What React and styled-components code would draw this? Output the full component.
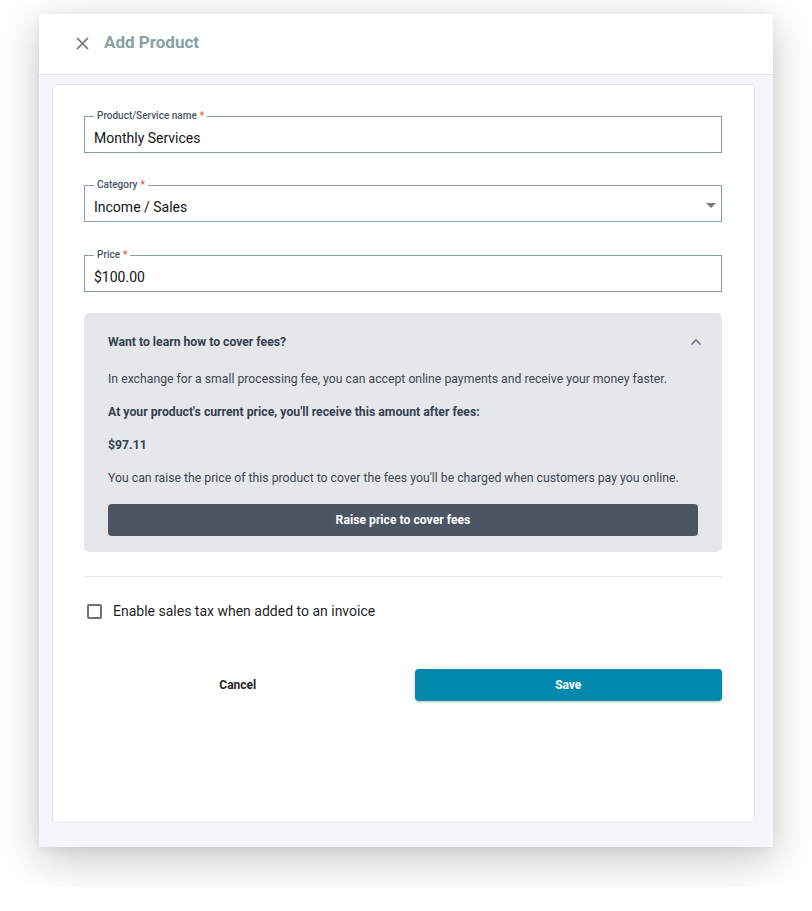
import styled, { createGlobalStyle } from "styled-components";

const GlobalStyle = createGlobalStyle`
  * { box-sizing: border-box; }
  body {
    margin: 0;
    background: #ffffff;
    font-family: Roboto, "Liberation Sans", Arial, sans-serif;
  }
`;

const Page = styled.div`
  padding: 14px 39px 40px 39px;
`;

const Modal = styled.div`
  width: 734px;
  height: 833px;
  display: flex;
  flex-direction: column;
  background: #f5f6fa;
  box-shadow: 0 12px 40px rgba(0, 0, 0, 0.22), 0 2px 10px rgba(0, 0, 0, 0.06);
`;

const Header = styled.div`
  height: 61px;
  flex-shrink: 0;
  display: flex;
  align-items: center;
  gap: 14px;
  padding: 0 0 4px 35px;
  background: #ffffff;
  border-bottom: 1px solid #e3e5ea;
`;

const CloseBtn = styled.button`
  all: unset;
  width: 16px;
  height: 16px;
  display: flex;
  align-items: center;
  justify-content: center;
  margin-top: 2px;
  cursor: pointer;
`;

const Title = styled.h1`
  margin: 0;
  font-size: 17px;
  font-weight: 700;
  color: #86a0a4;
`;

const Body = styled.div`
  flex: 1;
  padding: 9px 18px 24px 13px;
  display: flex;
`;

const Card = styled.div`
  flex: 1;
  background: #ffffff;
  border: 1px solid #e6e8ec;
  border-radius: 4px;
  padding: 31px 32px 0 31px;
  display: flex;
  flex-direction: column;
`;

const Field = styled.div`
  position: relative;
  height: 37px;
  border: 1px solid #83a0a4;
  display: flex;
  align-items: center;
  padding: 7px 9px 0 9px;
  margin-bottom: ${(p) => p.$mb || 32}px;
  font-size: 14px;
  color: #151515;
`;

const Label = styled.span`
  position: absolute;
  top: -7px;
  left: 9px;
  padding: 0 3px;
  background: #ffffff;
  font-size: 10px;
  line-height: 12px;
  font-weight: 500;
  color: #4b5563;
`;

const Req = styled.span`
  color: #e8592a;
  margin-left: 3px;
`;

const Caret = styled.span`
  position: absolute;
  right: 5px;
  top: 17px;
  border-left: 5px solid transparent;
  border-right: 5px solid transparent;
  border-top: 5px solid #757b83;
`;

const InfoBox = styled.div`
  background: #e5e7eb;
  border-radius: 5px;
  padding: 21px 24px 16px 24px;
  display: flex;
  flex-direction: column;
  gap: 17px;
`;

const InfoHead = styled.div`
  display: flex;
  align-items: center;
  justify-content: space-between;
  margin-bottom: 4px;
  svg {
    margin-right: -4px;
  }
`;

const InfoTitle = styled.div`
  font-size: 12.2px;
  line-height: 16px;
  font-weight: 700;
  color: #374151;
`;

const Text = styled.p`
  margin: 0;
  font-size: 12.25px;
  line-height: 16px;
  font-weight: ${(p) => (p.$bold ? 700 : 400)};
  color: ${(p) => (p.$bold ? "#374151" : "#3f4753")};
`;

const DarkButton = styled.button`
  all: unset;
  height: 32px;
  margin-top: 1px;
  border-radius: 4px;
  background: #4b5563;
  color: #ffffff;
  font-size: 12.2px;
  font-weight: 700;
  display: flex;
  align-items: center;
  justify-content: center;
  cursor: pointer;
`;

const Divider = styled.hr`
  margin: 24px 0 0 0;
  border: none;
  border-top: 1px solid #e5e7eb;
`;

const CheckRow = styled.label`
  display: flex;
  align-items: center;
  gap: 11px;
  margin: 25px 0 0 3px;
  height: 18px;
  font-size: 14px;
  color: #1f1f1f;
  cursor: pointer;
`;

const Box = styled.span`
  width: 15px;
  height: 15px;
  border: 2px solid #6b6f76;
  border-radius: 2px;
`;

const Actions = styled.div`
  display: grid;
  grid-template-columns: 1fr 1fr;
  gap: 23px;
  margin-top: 49px;
`;

const ActionButton = styled.button`
  all: unset;
  height: 32px;
  border-radius: 4px;
  display: flex;
  align-items: center;
  justify-content: center;
  font-size: 12px;
  font-weight: 700;
  cursor: pointer;
  color: ${(p) => (p.$primary ? "#ffffff" : "#1f1f1f")};
  background: ${(p) => (p.$primary ? "#0289ad" : "transparent")};
  box-shadow: ${(p) => (p.$primary ? "0 1px 3px rgba(0,0,0,0.25)" : "none")};
`;

export default function App() {
  return (
    <>
      <GlobalStyle />
      <Page>
        <Modal>
          <Header>
            <CloseBtn aria-label="Close">
              <svg width="13" height="13" viewBox="0 0 13 13">
                <path d="M1 1L12 12M12 1L1 12" stroke="#6e737a" strokeWidth="1.7" />
              </svg>
            </CloseBtn>
            <Title>Add Product</Title>
          </Header>
          <Body>
            <Card>
              <Field>
                <Label>
                  Product/Service name<Req>*</Req>
                </Label>
                Monthly Services
              </Field>
              <Field $mb={33}>
                <Label>
                  Category<Req>*</Req>
                </Label>
                Income / Sales
                <Caret />
              </Field>
              <Field $mb={21}>
                <Label>
                  Price<Req>*</Req>
                </Label>
                $100.00
              </Field>

              <InfoBox>
                <InfoHead>
                  <InfoTitle>Want to learn how to cover fees?</InfoTitle>
                  <svg width="12" height="8" viewBox="0 0 12 8">
                    <path d="M1.5 6.5L6 2L10.5 6.5" stroke="#6b7280" strokeWidth="1.6" fill="none" />
                  </svg>
                </InfoHead>
                <Text>
                  In exchange for a small processing fee, you can accept online payments and receive your money faster.
                </Text>
                <Text $bold>At your product's current price, you'll receive this amount after fees:</Text>
                <Text $bold>$97.11</Text>
                <Text>
                  You can raise the price of this product to cover the fees you'll be charged when customers pay you online.
                </Text>
                <DarkButton>Raise price to cover fees</DarkButton>
              </InfoBox>

              <Divider />

              <CheckRow>
                <Box />
                Enable sales tax when added to an invoice
              </CheckRow>

              <Actions>
                <ActionButton>Cancel</ActionButton>
                <ActionButton $primary>Save</ActionButton>
              </Actions>
            </Card>
          </Body>
        </Modal>
      </Page>
    </>
  );
}
